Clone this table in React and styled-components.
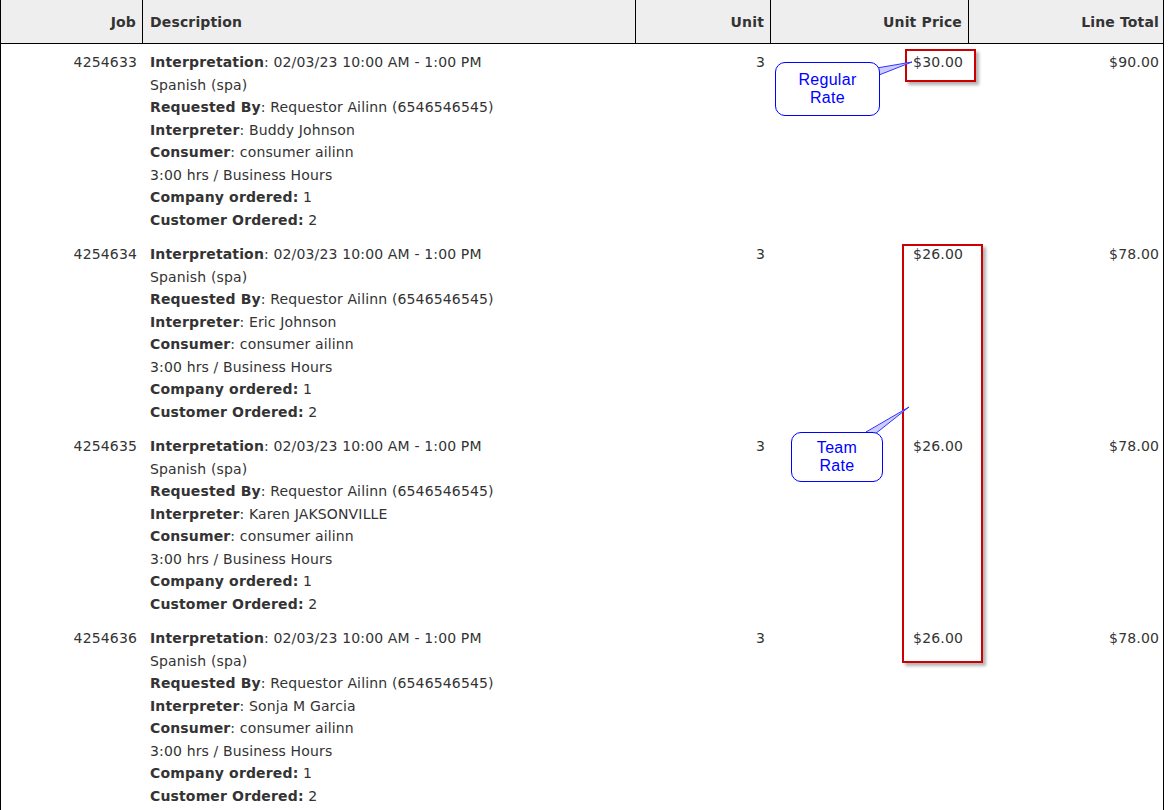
import React from 'react';
import styled, { createGlobalStyle } from 'styled-components';

const GlobalStyle = createGlobalStyle`
  html, body {
    margin: 0;
    padding: 0;
    background: #fff;
    overflow: hidden;
  }
  body {
    font-family: "DejaVu Sans", Verdana, sans-serif;
    font-size: 14px;
    letter-spacing: 0.15px;
    color: #333;
  }
`;

const COLUMNS = '142px 493px 135px 198px 1fr';

const Page = styled.div`
  position: relative;
  width: 1164px;
  border-left: 1px solid #000;
  border-right: 1px solid #000;
  box-sizing: border-box;
`;
const Header = styled.div`
  display: grid;
  grid-template-columns: ${COLUMNS};
  height: 43px;
  background: #eeeeee;
  border-bottom: 1px solid #000;
`;
const Th = styled.div`
  display: flex;
  align-items: center;
  justify-content: ${(p) => (p.$left ? 'flex-start' : 'flex-end')};
  padding: 1px ${(p) => (p.$last ? '4px' : '6px')} 0 7px;
  border-right: ${(p) => (p.$last ? 'none' : '1px solid #000')};
  font-weight: bold;
  color: #333;
`;
const Row = styled.div`
  display: grid;
  grid-template-columns: ${COLUMNS};
  padding: 7px 0 5px;
  line-height: 22.5px;
`;
const Td = styled.div`
  text-align: ${(p) => (p.$left ? 'left' : 'right')};
  padding: 0 ${(p) => (p.$last ? '4px' : '6px')} 0 7px;
`;
const Line = styled.div`
  white-space: nowrap;
`;
const Label = styled.b`
  font-weight: bold;
`;
const RedBox = styled.div`
  position: absolute;
  box-sizing: border-box;
  border: 2px solid #cc0000;
  box-shadow: 3px 3px 3px rgba(0, 0, 0, 0.3);
  pointer-events: none;
`;
const RegularBox = styled(RedBox)`
  left: 904px;
  top: 49px;
  width: 71px;
  height: 33px;
`;
const TeamBox = styled(RedBox)`
  left: 901px;
  top: 244px;
  width: 81px;
  height: 419px;
`;
const Callout = styled.div`
  position: absolute;
  box-sizing: border-box;
  display: flex;
  flex-direction: column;
  align-items: center;
  justify-content: center;
  border: 1.5px solid #0000ff;
  border-radius: 10px;
  background: #fff;
  font-family: "Liberation Sans", Arial, sans-serif;
  font-size: 16px;
  letter-spacing: 0.3px;
  line-height: 18px;
  color: #0000ff;
  text-align: center;
`;
const RegularCallout = styled(Callout)`
  left: 774px;
  top: 62px;
  width: 105px;
  height: 54px;
`;
const TeamCallout = styled(Callout)`
  left: 790px;
  top: 432px;
  width: 92px;
  height: 50px;
`;
const Tails = styled.svg`
  position: absolute;
  left: -1px;
  top: 0;
  pointer-events: none;
`;

const jobs = [
  { id: '4254633', interpreter: 'Buddy Johnson', price: '$30.00', total: '$90.00' },
  { id: '4254634', interpreter: 'Eric Johnson', price: '$26.00', total: '$78.00' },
  { id: '4254635', interpreter: 'Karen JAKSONVILLE', price: '$26.00', total: '$78.00' },
  { id: '4254636', interpreter: 'Sonja M Garcia', price: '$26.00', total: '$78.00' },
];

function Description({ interpreter }) {
  return (
    <>
      <Line><Label>Interpretation</Label>: 02/03/23 10:00 AM - 1:00 PM</Line>
      <Line>Spanish (spa)</Line>
      <Line><Label>Requested By</Label>: Requestor Ailinn (6546546545)</Line>
      <Line><Label>Interpreter</Label>: {interpreter}</Line>
      <Line><Label>Consumer</Label>: consumer ailinn</Line>
      <Line>3:00 hrs / Business Hours</Line>
      <Line><Label>Company ordered:</Label> 1</Line>
      <Line><Label>Customer Ordered:</Label> 2</Line>
    </>
  );
}

export default function App() {
  return (
    <>
      <GlobalStyle />
      <Page>
        <Header>
          <Th>Job</Th>
          <Th $left>Description</Th>
          <Th>Unit</Th>
          <Th>Unit Price</Th>
          <Th $last>Line Total</Th>
        </Header>
        {jobs.map((job) => (
          <Row key={job.id}>
            <Td>{job.id}</Td>
            <Td $left>
              <Description interpreter={job.interpreter} />
            </Td>
            <Td>3</Td>
            <Td>{job.price}</Td>
            <Td $last>{job.total}</Td>
          </Row>
        ))}

        <RegularBox />
        <TeamBox />

        <Tails width="1170" height="810">
          <polygon points="871,69 879,75 912,62" fill="#ccccff" stroke="#3333ff" strokeWidth="1" />
          <polygon points="866,432 875,434 909,407" fill="#ccccff" stroke="#3333ff" strokeWidth="1" />
        </Tails>

        <RegularCallout>
          <span>Regular</span>
          <span>Rate</span>
        </RegularCallout>
        <TeamCallout>
          <span>Team</span>
          <span>Rate</span>
        </TeamCallout>
      </Page>
    </>
  );
}
